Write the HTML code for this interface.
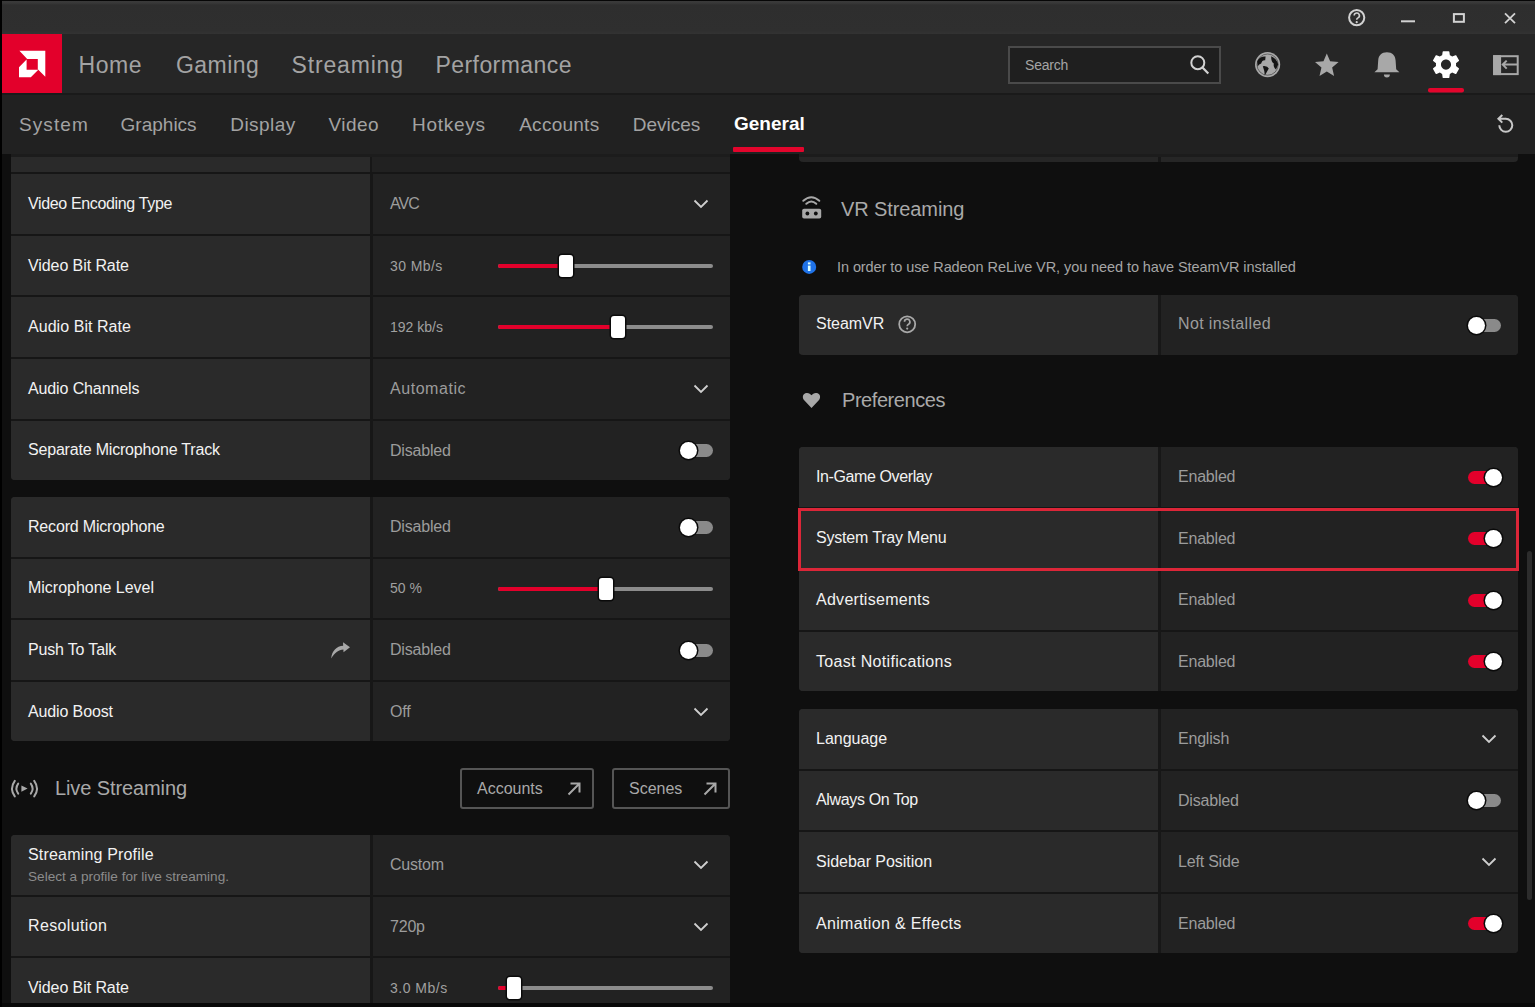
<!DOCTYPE html><html><head><meta charset="utf-8"><style>
*{box-sizing:border-box;margin:0;padding:0}
html,body{width:1535px;height:1007px;overflow:hidden;background:#0f0f0f;font-family:"Liberation Sans",sans-serif}
body{position:relative}
.abs{position:absolute}
#titlebar{position:absolute;left:0;top:0;width:1535px;height:34px;background:linear-gradient(#3a3a3a 0px,#383838 2px,#2e2e2e 4px,#2f2f2f 30px,#333 33px);border-top:1px solid #060606}
#nav{position:absolute;left:0;top:34px;width:1535px;height:59px;background:#262626}
#subnav{position:absolute;left:0;top:93px;width:1535px;height:61px;background:#212121;border-top:2px solid #1a1a1a}
#leftborder{position:absolute;left:0;top:0;width:2px;height:1007px;background:#000;z-index:50}
#bottomborder{position:absolute;left:0;top:1003px;width:1535px;height:4px;background:#080808;z-index:40}
#logo{position:absolute;left:2px;top:34px;width:60px;height:59px;background:#e3002b}
.nt{position:absolute;top:49px;font-size:23px;line-height:32px;color:#a3a3a3;white-space:nowrap}
.st{position:absolute;top:111.5px;font-size:19px;line-height:26px;color:#a3a3a3;white-space:nowrap}
.panel{position:absolute;width:719px;background:#2a2a2a;border-radius:4px;overflow:hidden}
.row{position:absolute;left:0;width:719px;height:59.6px}
.lbl{position:absolute;left:0;top:0;width:359px;height:100%;background:#2a2a2a;color:#f2f2f2;font-size:16px;letter-spacing:-0.35px;padding-left:17px;display:flex;align-items:center;white-space:nowrap}
.val{position:absolute;left:361px;top:0;width:358px;height:100%;background:#222;color:#9c9c9c;font-size:16px;letter-spacing:-0.2px;display:flex;align-items:center;white-space:nowrap}
.vt{position:absolute;left:18px;top:20px;line-height:20px}
.vs{position:absolute;left:18px;font-size:14px;color:#a0a0a0;letter-spacing:0}
.hsep{position:absolute;left:0;width:719px;height:2px;background:#161616}
.panel::after{content:"";position:absolute;left:359px;top:0;width:3px;height:100%;background:#171717}
.chev{position:absolute;left:321px;top:25px}
.tg{position:absolute;left:307px;top:21.5px;width:35px;height:17px}
.tg .tr{position:absolute;left:0.5px;top:2px;width:33.5px;height:13px;border-radius:6.5px;background:#8a8a8a}
.tg.on .tr{background:#e3002b}
.tg .kn{position:absolute;top:0;width:17px;height:17px;border-radius:50%;background:#fff;box-shadow:0 0 0 1.5px #0a0a0a}
.tg.off .kn{left:0.5px}
.tg.on .kn{left:17.5px}
.sl{position:absolute;top:28px;height:4px;background:#8c8c8c;border-radius:2px}
.slr{position:absolute;left:0;top:0;height:4px;background:#e3002b;border-radius:2px}
.slt{position:absolute;top:-9px;width:14px;height:22px;background:#fff;border-radius:3px;box-shadow:0 0 0 1.5px #0a0a0a}
.steam .lbl,.steam .vt{margin-top:-1px}
.hdr{position:absolute;font-size:20px;line-height:26px;color:#a9a9a9;white-space:nowrap;letter-spacing:-0.1px}
.btn{position:absolute;top:768px;height:41px;border:2px solid #555;border-radius:3px;color:#a9a9a9;font-size:16px;line-height:37px;padding-left:15px;white-space:nowrap}
</style></head><body>

<div id="leftborder"></div><div id="bottomborder"></div>
<div id="titlebar"></div>
<div id="nav"></div>
<div id="logo"><svg width="60" height="59" viewBox="0 0 60 59"><path d="M17.4 16.7 H43.3 V42.7 L35.8 35.2 V24.9 H25.2 Z" fill="#fff"/><path d="M24.6 25.6 L17 33.2 V43.2 H28.8 L36.3 35.8 H24.6 Z" fill="#fff"/></svg></div>
<div class="nt" style="left:78.5px;letter-spacing:0.6px">Home</div>
<div class="nt" style="left:176px;letter-spacing:0.46px">Gaming</div>
<div class="nt" style="left:291.5px;letter-spacing:0.84px">Streaming</div>
<div class="nt" style="left:435.5px;letter-spacing:0.43px">Performance</div>
<div id="subnav"></div>
<div class="st" style="left:19px;letter-spacing:1.1px">System</div>
<div class="st" style="left:120.6px;letter-spacing:0px">Graphics</div>
<div class="st" style="left:230.3px;letter-spacing:0.43px">Display</div>
<div class="st" style="left:328.5px;letter-spacing:0.45px">Video</div>
<div class="st" style="left:412.1px;letter-spacing:0.72px">Hotkeys</div>
<div class="st" style="left:519.2px;letter-spacing:0.26px">Accounts</div>
<div class="st" style="left:632.8px;letter-spacing:0px">Devices</div>
<div class="st" style="left:734px;top:111px;color:#fff;font-weight:bold">General</div>
<div class="abs" style="left:733px;top:147px;width:71px;height:5px;background:#e3052c;border-radius:1px"></div>
<div class="abs" style="left:799px;top:154px;width:719px;height:8px;background:#262626;border-radius:0 0 4px 4px"></div>
<div class="abs" style="left:1158px;top:154px;width:3px;height:8px;background:#171717"></div>
<div class="abs" style="left:11px;top:154px;width:719px;height:18.3px;background:#2a2a2a"></div>
<div class="abs" style="left:370px;top:154px;width:3px;height:18.3px;background:#171717"></div>
<div class="abs" style="left:372px;top:154px;width:358px;height:18.3px;background:#212121"></div>
<div class="abs" style="left:11px;top:154px;width:719px;height:3px;background:#1c1c1c"></div>
<div class="abs" style="left:11px;top:172.3px;width:719px;height:2px;background:#161616"></div>
<div class="abs" style="left:799px;top:154px;width:719px;height:3px;background:#1c1c1c"></div>
<div class="panel" style="left:11px;top:174.3px;height:306.0px;border-radius:0 0 4px 4px">
<div class="row" style="top:0.0px">
<div class="lbl" style="letter-spacing:-0.35px">Video Encoding Type</div>
<div class="val">
<span class="vt" style="letter-spacing:-1.00px">AVC</span><svg class="chev" width="16" height="10" viewBox="0 0 16 10"><path d="M1.5 1.5 L8 8 L14.5 1.5" fill="none" stroke="#cfcfcf" stroke-width="1.8"/></svg>
</div></div>
<div class="hsep" style="top:59.6px"></div>
<div class="row" style="top:61.6px">
<div class="lbl" style="letter-spacing:-0.08px">Video Bit Rate</div>
<div class="val">
<span class="vs" style="letter-spacing:0.40px">30 Mb/s</span><div class="sl" style="left:126px;width:215px"><div class="slr" style="width:67.5px"></div><div class="slt" style="left:60.5px"></div></div>
</div></div>
<div class="hsep" style="top:121.2px"></div>
<div class="row" style="top:123.2px">
<div class="lbl" style="letter-spacing:0.05px">Audio Bit Rate</div>
<div class="val">
<span class="vs" style="letter-spacing:0.00px">192 kb/s</span><div class="sl" style="left:126px;width:215px"><div class="slr" style="width:120px"></div><div class="slt" style="left:113px"></div></div>
</div></div>
<div class="hsep" style="top:182.8px"></div>
<div class="row" style="top:184.8px">
<div class="lbl" style="letter-spacing:-0.12px">Audio Channels</div>
<div class="val">
<span class="vt" style="letter-spacing:0.55px">Automatic</span><svg class="chev" width="16" height="10" viewBox="0 0 16 10"><path d="M1.5 1.5 L8 8 L14.5 1.5" fill="none" stroke="#cfcfcf" stroke-width="1.8"/></svg>
</div></div>
<div class="hsep" style="top:244.4px"></div>
<div class="row" style="top:246.4px">
<div class="lbl" style="letter-spacing:-0.19px">Separate Microphone Track</div>
<div class="val">
<span class="vt" style="letter-spacing:-0.20px">Disabled</span><div class="tg off"><div class="tr"></div><div class="kn"></div></div>
</div></div>
</div>
<div class="panel" style="left:11px;top:497px;height:244.4px;border-radius:4px">
<div class="row" style="top:0.0px">
<div class="lbl" style="letter-spacing:-0.18px">Record Microphone</div>
<div class="val">
<span class="vt" style="letter-spacing:-0.20px">Disabled</span><div class="tg off"><div class="tr"></div><div class="kn"></div></div>
</div></div>
<div class="hsep" style="top:59.6px"></div>
<div class="row" style="top:61.6px">
<div class="lbl" style="letter-spacing:-0.02px">Microphone Level</div>
<div class="val">
<span class="vs" style="letter-spacing:0.00px">50 %</span><div class="sl" style="left:126px;width:215px"><div class="slr" style="width:108px"></div><div class="slt" style="left:101px"></div></div>
</div></div>
<div class="hsep" style="top:121.2px"></div>
<div class="row" style="top:123.2px">
<div class="lbl" style="letter-spacing:-0.17px">Push To Talk</div>
<div class="val">
<span class="vt" style="letter-spacing:-0.20px">Disabled</span><div class="tg off"><div class="tr"></div><div class="kn"></div></div>
</div></div>
<div class="hsep" style="top:182.8px"></div>
<div class="row" style="top:184.8px">
<div class="lbl" style="letter-spacing:-0.13px">Audio Boost</div>
<div class="val">
<span class="vt" style="letter-spacing:-0.20px">Off</span><svg class="chev" width="16" height="10" viewBox="0 0 16 10"><path d="M1.5 1.5 L8 8 L14.5 1.5" fill="none" stroke="#cfcfcf" stroke-width="1.8"/></svg>
</div></div>
</div>
<div class="panel" style="left:11px;top:835px;height:182.8px;border-radius:4px">
<div class="row" style="top:0.0px">
<div class="lbl" style="letter-spacing:-0.35px">Streaming Profile</div>
<div class="val">
<span class="vt" style="letter-spacing:-0.20px">Custom</span><svg class="chev" width="16" height="10" viewBox="0 0 16 10"><path d="M1.5 1.5 L8 8 L14.5 1.5" fill="none" stroke="#cfcfcf" stroke-width="1.8"/></svg>
</div></div>
<div class="hsep" style="top:59.6px"></div>
<div class="row" style="top:61.6px">
<div class="lbl" style="letter-spacing:0.37px">Resolution</div>
<div class="val">
<span class="vt" style="letter-spacing:-0.20px">720p</span><svg class="chev" width="16" height="10" viewBox="0 0 16 10"><path d="M1.5 1.5 L8 8 L14.5 1.5" fill="none" stroke="#cfcfcf" stroke-width="1.8"/></svg>
</div></div>
<div class="hsep" style="top:121.2px"></div>
<div class="row" style="top:123.2px">
<div class="lbl" style="letter-spacing:-0.08px">Video Bit Rate</div>
<div class="val">
<span class="vs" style="letter-spacing:0.50px">3.0 Mb/s</span><div class="sl" style="left:126px;width:215px"><div class="slr" style="width:16px"></div><div class="slt" style="left:9px"></div></div>
</div></div>
</div>
<div class="abs" style="left:28px;top:838px;width:300px;height:56px;background:#2a2a2a;z-index:5"></div>
<div class="abs" style="left:28px;top:845px;font-size:16px;line-height:20px;letter-spacing:0.18px;color:#f2f2f2;white-space:nowrap;z-index:6">Streaming Profile</div>
<div class="abs" style="left:28px;top:867.5px;font-size:13.6px;line-height:18px;color:#8c8c8c;white-space:nowrap;z-index:6">Select a profile for live streaming.</div>
<div class="panel steam" style="left:799px;top:295px;height:59.6px;border-radius:4px">
<div class="row" style="top:0.0px">
<div class="lbl" style="letter-spacing:-0.03px">SteamVR</div>
<div class="val">
<span class="vt" style="letter-spacing:0.38px">Not installed</span><div class="tg off"><div class="tr"></div><div class="kn"></div></div>
</div></div>
</div>
<div class="panel" style="left:799px;top:447px;height:244.4px;border-radius:4px">
<div class="row" style="top:0.0px">
<div class="lbl" style="letter-spacing:-0.39px">In-Game Overlay</div>
<div class="val">
<span class="vt" style="letter-spacing:-0.20px">Enabled</span><div class="tg on"><div class="tr"></div><div class="kn"></div></div>
</div></div>
<div class="hsep" style="top:59.6px"></div>
<div class="row" style="top:61.6px">
<div class="lbl" style="letter-spacing:-0.19px">System Tray Menu</div>
<div class="val">
<span class="vt" style="letter-spacing:-0.20px">Enabled</span><div class="tg on"><div class="tr"></div><div class="kn"></div></div>
</div></div>
<div class="hsep" style="top:121.2px"></div>
<div class="row" style="top:123.2px">
<div class="lbl" style="letter-spacing:0.27px">Advertisements</div>
<div class="val">
<span class="vt" style="letter-spacing:-0.20px">Enabled</span><div class="tg on"><div class="tr"></div><div class="kn"></div></div>
</div></div>
<div class="hsep" style="top:182.8px"></div>
<div class="row" style="top:184.8px">
<div class="lbl" style="letter-spacing:0.33px">Toast Notifications</div>
<div class="val">
<span class="vt" style="letter-spacing:-0.20px">Enabled</span><div class="tg on"><div class="tr"></div><div class="kn"></div></div>
</div></div>
</div>
<div class="panel" style="left:799px;top:709px;height:244.4px;border-radius:4px">
<div class="row" style="top:0.0px">
<div class="lbl" style="letter-spacing:-0.01px">Language</div>
<div class="val">
<span class="vt" style="letter-spacing:-0.20px">English</span><svg class="chev" width="16" height="10" viewBox="0 0 16 10"><path d="M1.5 1.5 L8 8 L14.5 1.5" fill="none" stroke="#cfcfcf" stroke-width="1.8"/></svg>
</div></div>
<div class="hsep" style="top:59.6px"></div>
<div class="row" style="top:61.6px">
<div class="lbl" style="letter-spacing:-0.35px">Always On Top</div>
<div class="val">
<span class="vt" style="letter-spacing:-0.20px">Disabled</span><div class="tg off"><div class="tr"></div><div class="kn"></div></div>
</div></div>
<div class="hsep" style="top:121.2px"></div>
<div class="row" style="top:123.2px">
<div class="lbl" style="letter-spacing:-0.03px">Sidebar Position</div>
<div class="val">
<span class="vt" style="letter-spacing:-0.20px">Left Side</span><svg class="chev" width="16" height="10" viewBox="0 0 16 10"><path d="M1.5 1.5 L8 8 L14.5 1.5" fill="none" stroke="#cfcfcf" stroke-width="1.8"/></svg>
</div></div>
<div class="hsep" style="top:182.8px"></div>
<div class="row" style="top:184.8px">
<div class="lbl" style="letter-spacing:0.33px">Animation &amp; Effects</div>
<div class="val">
<span class="vt" style="letter-spacing:-0.20px">Enabled</span><div class="tg on"><div class="tr"></div><div class="kn"></div></div>
</div></div>
</div>
<div class="hdr" style="left:55px;top:775px">Live Streaming</div>
<div class="hdr" style="left:841px;top:196px">VR Streaming</div>
<div class="hdr" style="left:842px;top:387px;letter-spacing:-0.44px">Preferences</div>
<div class="abs" style="left:837px;top:259px;font-size:14.5px;color:#a5a5a5;white-space:nowrap;letter-spacing:-0.08px">In order to use Radeon ReLive VR, you need to have SteamVR installed</div>
<div class="btn" style="left:460px;width:134px">Accounts</div>
<div class="btn" style="left:612px;width:118px">Scenes</div>
<div class="abs" style="left:798px;top:508px;width:721px;height:63px;border:3px solid #dc2638;z-index:30"></div>
<div class="abs" style="left:1008px;top:46px;width:213px;height:38px;border:2px solid #4a4a4a;background:#1f1f1f"></div>
<div class="abs" style="left:1025px;top:55px;font-size:14px;line-height:20px;color:#a5a5a5;letter-spacing:-0.2px">Search</div>
<svg style="position:absolute;left:0;top:0;z-index:60" width="1535" height="1007" viewBox="0 0 1535 1007">
<circle cx="1356.7" cy="17.6" r="7.6" fill="none" stroke="#d2d2d2" stroke-width="2"/>
<path d="M1354.2 15.6 a2.6 2.6 0 1 1 3.8 2.3 c-0.8 0.4 -1.3 0.9 -1.3 1.9" fill="none" stroke="#d2d2d2" stroke-width="1.6"/>
<circle cx="1356.7" cy="22.2" r="1.1" fill="#d2d2d2"/>
<path d="M1401 21.3 H1415" stroke="#d2d2d2" stroke-width="2"/>
<rect x="1453.9" y="14.1" width="10" height="7.7" fill="none" stroke="#d2d2d2" stroke-width="2"/>
<path d="M1505 13.3 L1515 23.2 M1515 13.3 L1505 23.2" stroke="#d2d2d2" stroke-width="1.8"/>
<circle cx="1197.8" cy="62.7" r="6.5" fill="none" stroke="#d2d2d2" stroke-width="2"/>
<path d="M1202.5 67.5 L1208.3 73.5" stroke="#d2d2d2" stroke-width="2.2"/>
<circle cx="1267.6" cy="64.6" r="12.6" fill="#a8a8a8"/>
<circle cx="1267.6" cy="64.6" r="10.6" fill="none" stroke="#1a1a1a" stroke-width="0.8" opacity="0.6"/>
<path d="M1257.2 61.5 Q1259.5 56.2 1265.6 56.6 L1265.2 60.2 Q1262 59.8 1261.2 63.6 Q1259 64.2 1257.6 66.6 Z" fill="#141414"/>
<path d="M1271.2 56.3 Q1276.8 58.8 1278.2 64.5 L1276 69.5 Q1273 67 1273.8 63.5 Q1271 62 1271.2 56.3 Z" fill="#141414"/>
<path d="M1262.8 66.2 Q1267.5 65.6 1268.8 68.6 L1264.8 75.5 Q1264.6 70.4 1262.8 66.2 Z" fill="#141414"/>
<path transform="translate(1312.64 51.14) scale(1.18)" d="M12 17.27L18.18 21l-1.64-7.03L22 9.24l-7.19-.61L12 2 9.19 8.63 2 9.24l5.46 4.73L5.82 21z" fill="#a8a8a8"/>
<path d="M1374.4 72.3 L1377.6 69.2 L1378.2 60.5 C1378.4 55.6 1381.6 52.3 1386.9 52.3 C1392.2 52.3 1395.4 55.6 1395.6 60.5 L1396.2 69.2 L1399.4 72.3 Z" fill="#a8a8a8"/>
<path d="M1383.9 74.4 A3 3 0 0 0 1389.9 74.4 Z" fill="#a8a8a8"/>
<path transform="translate(1446 64.6) scale(1.4) translate(-12 -12)" d="M19.14,12.94c0.04-0.3,0.06-0.61,0.06-0.94c0-0.32-0.02-0.64-0.07-0.94l2.03-1.58c0.18-0.14,0.23-0.41,0.12-0.61l-1.92-3.32c-0.12-0.22-0.37-0.29-0.59-0.22l-2.39,0.96c-0.5-0.38-1.03-0.7-1.62-0.94L14.4,2.81c-0.04-0.24-0.24-0.41-0.48-0.41h-3.84c-0.24,0-0.43,0.17-0.47,0.41L9.25,5.35C8.66,5.59,8.12,5.92,7.63,6.29L5.24,5.33c-0.22-0.08-0.47,0-0.59,0.22L2.74,8.87C2.62,9.08,2.66,9.34,2.86,9.48l2.03,1.58C4.84,11.36,4.8,11.69,4.8,12s0.02,0.64,0.07,0.94l-2.03,1.58c-0.18,0.14-0.23,0.41-0.12,0.61l1.92,3.32c0.12,0.22,0.37,0.29,0.59,0.22l2.39-0.96c0.5,0.38,1.03,0.7,1.62,0.94l0.36,2.54c0.05,0.24,0.24,0.41,0.48,0.41h3.84c0.24,0,0.44-0.17,0.47-0.41l0.36-2.54c0.59-0.24,1.13-0.56,1.62-0.94l2.39,0.96c0.22,0.08,0.47,0,0.59-0.22l1.92-3.32c0.12-0.22,0.07-0.47-0.12-0.61L19.14,12.94z M12,15.6c-1.98,0-3.6-1.62-3.6-3.6s1.62-3.6,3.6-3.6s3.6,1.62,3.6,3.6S13.98,15.6,12,15.6z" fill="#ffffff" fill-rule="evenodd"/>
<rect x="1428" y="88" width="36" height="4.5" rx="2" fill="#e3052c"/>
<rect x="1494.1" y="56.2" width="23.6" height="17.9" fill="none" stroke="#a8a8a8" stroke-width="2"/>
<rect x="1493.1" y="55.2" width="8" height="19.9" fill="#a8a8a8"/>
<path d="M1503.2 64.6 H1517.5 M1506.7 60.6 L1502.7 64.6 L1506.7 68.6" fill="none" stroke="#a8a8a8" stroke-width="2"/>
<path d="M1505.8 118.8 A6.5 6.5 0 1 1 1499.3 125.3" fill="none" stroke="#c8c8c8" stroke-width="2"/>
<path d="M1506 118.8 H1498.5 M1502.3 115 L1498.4 118.8 L1502.3 122.6" fill="none" stroke="#c8c8c8" stroke-width="2"/>
<path d="M803.3 200.8 Q811.3 193.8 819.3 200.8" fill="none" stroke="#a8a8a8" stroke-width="2" stroke-linecap="round"/>
<path d="M806.3 203.8 Q811.3 199.3 816.3 203.8" fill="none" stroke="#a8a8a8" stroke-width="2" stroke-linecap="round"/>
<path d="M802.2 210.5 Q802.2 208.7 804 208.7 H819.4 Q821.2 208.7 821.2 210.5 V216.8 Q821.2 218.6 819.4 218.6 H804 Q802.2 218.6 802.2 216.8 Z" fill="#a8a8a8"/>
<circle cx="807.4" cy="213.5" r="1.9" fill="#0f0f0f"/><circle cx="815.8" cy="213.5" r="1.9" fill="#0f0f0f"/>
<circle cx="809.2" cy="266.9" r="7" fill="#1f72e8"/>
<rect x="807.9" y="262.4" width="2.6" height="2" fill="#dff"/><rect x="807.9" y="265.6" width="2.6" height="5.4" fill="#dff"/>
<path d="M811.5 407.9 L804.2 400.2 C801.9 397.6 802.6 393.2 806.6 392.9 C808.9 392.7 810.4 394 811.5 395.3 C812.6 394 814.1 392.7 816.4 392.9 C820.4 393.2 821.1 397.6 818.8 400.2 Z" fill="#a8a8a8"/>
<path d="M14.8 780.8 Q9.2 788.6 14.8 796.4 M34.2 780.8 Q39.8 788.6 34.2 796.4" fill="none" stroke="#a8a8a8" stroke-width="2" stroke-linecap="round"/>
<path d="M18.2 783.6 Q14.6 788.6 18.2 793.6 M30.8 783.6 Q34.4 788.6 30.8 793.6" fill="none" stroke="#a8a8a8" stroke-width="2" stroke-linecap="round"/>
<path d="M21.4 785.4 L27.6 788.6 L21.4 791.8 Z" fill="#a8a8a8"/>
<path d="M568.5 794.5 L579.5 783.5 M570.5 783.5 H579.5 V792.5" fill="none" stroke="#a8a8a8" stroke-width="2"/>
<path d="M704.5 794.5 L715.5 783.5 M706.5 783.5 H715.5 V792.5" fill="none" stroke="#a8a8a8" stroke-width="2"/>
<path d="M331.2 658.5 C331.8 651 336.5 646.2 343.2 645.8 L343 642.3 L350 647.3 L343.5 652.2 L343.4 649.4 C338.5 649.6 334.6 652.6 331.2 658.5 Z" fill="#a8a8a8"/>
<circle cx="907.2" cy="324.3" r="8" fill="none" stroke="#a8a8a8" stroke-width="1.8"/>
<path d="M904.5 321.8 a2.7 2.7 0 1 1 4 2.4 c-0.8 0.4 -1.3 0.9 -1.3 2" fill="none" stroke="#a8a8a8" stroke-width="1.7"/>
<circle cx="907.2" cy="328.6" r="1.1" fill="#a8a8a8"/>
<rect x="1527" y="551" width="5" height="349" rx="2.5" fill="#2c2c2c"/>
</svg>
</body></html>
